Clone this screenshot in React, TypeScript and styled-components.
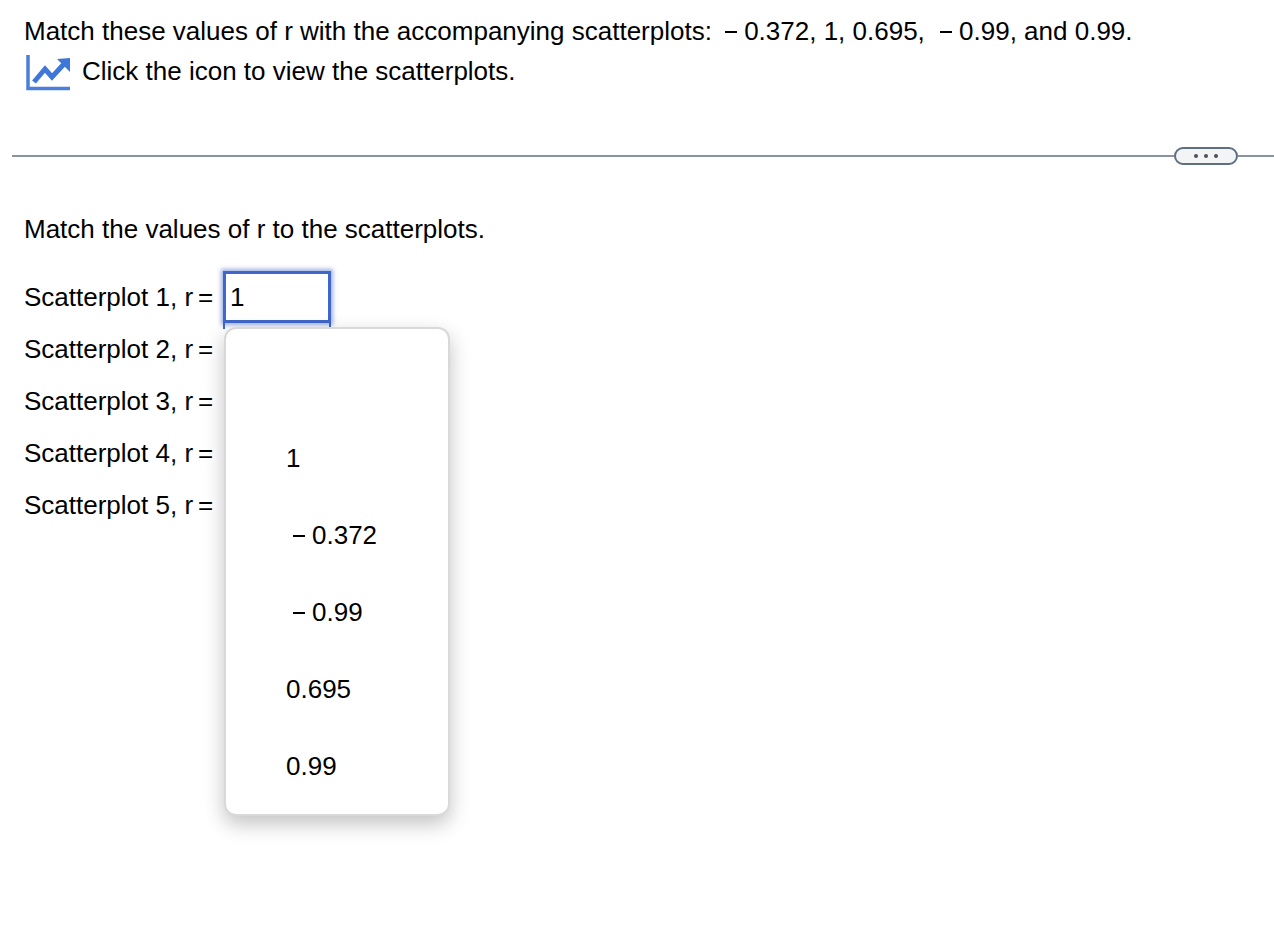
import React from 'react';
import styled, { createGlobalStyle } from 'styled-components';

const GlobalStyle = createGlobalStyle`
  html, body {
    margin: 0;
    padding: 0;
    background: #fff;
  }
  body {
    font-family: "Liberation Sans", Arial, sans-serif;
    font-size: 26px;
    color: #000;
  }
`;

const Page = styled.div`
  width: 1274px;
  height: 952px;
  overflow: hidden;
  padding: 11px 0 0 12px;
  box-sizing: border-box;
`;

const Intro = styled.div`
  padding-left: 12px;
  display: flex;
  flex-direction: column;
`;

const Line = styled.div`
  height: 40px;
  line-height: 40px;
  white-space: nowrap;
  display: flex;
  align-items: center;
`;

const Minus = styled.span<{ $lead?: number }>`
  display: inline-block;
  width: 12px;
  height: 2px;
  background: #000;
  margin: 1px 7px 0 ${props => props.$lead ?? 0}px;
`;

const IconButton = styled.button`
  width: 46px;
  height: 40px;
  padding: 0;
  margin: 0 11px 0 1px;
  border: none;
  background: none;
  display: block;
`;

const Divider = styled.div`
  margin-top: 56px;
  height: 18px;
  display: flex;
  align-items: center;
`;

const Rule = styled.div<{ $width?: number }>`
  height: 2px;
  background: #8a93a0;
  flex: ${props => (props.$width ? `0 0 ${props.$width}px` : '1')};
`;

const MoreButton = styled.button`
  width: 64px;
  height: 18px;
  flex: none;
  padding: 0;
  border: 2px solid #5e6f80;
  border-radius: 9px;
  background: #f3f4f6;
  display: flex;
  align-items: center;
  justify-content: center;
  gap: 6px;
  box-sizing: border-box;
`;

const Dot = styled.span`
  width: 4px;
  height: 4px;
  border-radius: 50%;
  background: #4a5058;
`;

const Answers = styled.div`
  padding: 44px 0 0 12px;
`;

const Prompt = styled.div`
  height: 40px;
  line-height: 40px;
`;

const Rows = styled.div`
  margin-top: 22px;
  display: flex;
  flex-direction: column;
  position: relative;
`;

const Row = styled.div`
  height: 52px;
  display: flex;
  align-items: center;
  white-space: nowrap;
`;

const Label = styled.span`
  width: 199px;
  flex: none;
`;

const Equals = styled.span`
  margin-left: 5px;
`;

const AnswerBox = styled.div`
  position: relative;
  width: 108px;
  height: 52px;
  flex: none;
  box-sizing: border-box;
  border: 3px solid #3f66c8;
  box-shadow: 0 0 4px 2px rgba(63, 102, 200, 0.5);
  padding-left: 4px;
  line-height: 46px;
  background: #fff;

  /* top edge of the next answer box, showing above the open menu */
  &::after {
    content: '';
    position: absolute;
    left: -3px;
    right: -3px;
    top: 49px;
    height: 6px;
    border-left: 2px solid #3f66c8;
    border-right: 2px solid #3f66c8;
  }
`;

const Menu = styled.ul`
  position: absolute;
  left: 200px;
  top: 56px;
  width: 226px;
  height: 489px;
  margin: 0;
  padding: 91px 0 0;
  list-style: none;
  box-sizing: border-box;
  background: #fff;
  border: 2px solid #d9d9d9;
  border-radius: 12px;
  box-shadow: 0 8px 20px rgba(0, 0, 0, 0.24);
`;

const Option = styled.li`
  height: 77px;
  line-height: 77px;
  padding-left: 60px;
  display: flex;
  align-items: center;
`;

const TrendIcon = () => (
  <svg width="46" height="40" viewBox="0 0 46 40">
    <path d="M3 4v33.5H45" fill="none" stroke="#4a7fdc" strokeWidth="3.5" />
    <path
      d="M9 31l11-13 7 8 12-13"
      fill="none"
      stroke="#3f77d8"
      strokeWidth="5"
    />
    <path d="M32 8l13-1v14z" fill="#3f77d8" />
  </svg>
);

const rows = [1, 2, 3, 4, 5];

const App: React.FC = () => {
  return (
    <Page>
      <GlobalStyle />
      <Intro>
        <Line>
          Match these values of r with the accompanying scatterplots:&nbsp;
          <Minus $lead={6} />
          0.372, 1, 0.695,&nbsp;
          <Minus $lead={8} />
          0.99, and 0.99.
        </Line>
        <Line>
          <IconButton aria-label="View the scatterplots">
            <TrendIcon />
          </IconButton>
          Click the icon to view the scatterplots.
        </Line>
      </Intro>
      <Divider>
        <Rule />
        <MoreButton aria-label="More">
          <Dot />
          <Dot />
          <Dot />
        </MoreButton>
        <Rule $width={36} />
      </Divider>
      <Answers>
        <Prompt>Match the values of r to the scatterplots.</Prompt>
        <Rows>
          {rows.map(n => (
            <Row key={n}>
              <Label>
                Scatterplot {n}, r<Equals>=</Equals>
              </Label>
              {n === 1 && <AnswerBox>1</AnswerBox>}
            </Row>
          ))}
          <Menu>
            <Option>1</Option>
            <Option>
              <Minus $lead={7} />
              0.372
            </Option>
            <Option>
              <Minus $lead={7} />
              0.99
            </Option>
            <Option>0.695</Option>
            <Option>0.99</Option>
          </Menu>
        </Rows>
      </Answers>
    </Page>
  );
};

export default App;
